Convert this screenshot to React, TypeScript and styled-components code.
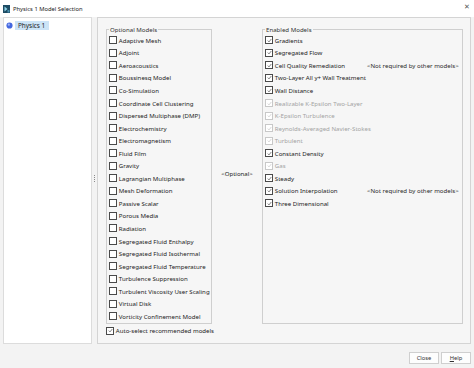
import React from "react";
import styled, { createGlobalStyle } from "styled-components";

const GlobalStyle = createGlobalStyle`
  html, body {
    margin: 0;
    padding: 0;
    background: #f3f3f3;
  }
  body {
    font-family: "Noto Sans", "Open Sans", sans-serif;
    color: #1b1b1b;
  }
`;

const optionalModels = [
  "Adaptive Mesh",
  "Adjoint",
  "Aeroacoustics",
  "Boussinesq Model",
  "Co-Simulation",
  "Coordinate Cell Clustering",
  "Dispersed Multiphase (DMP)",
  "Electrochemistry",
  "Electromagnetism",
  "Fluid Film",
  "Gravity",
  "Lagrangian Multiphase",
  "Mesh Deformation",
  "Passive Scalar",
  "Porous Media",
  "Radiation",
  "Segregated Fluid Enthalpy",
  "Segregated Fluid Isothermal",
  "Segregated Fluid Temperature",
  "Turbulence Suppression",
  "Turbulent Viscosity User Scaling",
  "Virtual Disk",
  "Vorticity Confinement Model",
];

type Enabled = { name: string; locked?: boolean; note?: boolean };

const enabledModels: Enabled[] = [
  { name: "Gradients" },
  { name: "Segregated Flow" },
  { name: "Cell Quality Remediation", note: true },
  { name: "Two-Layer All y+ Wall Treatment" },
  { name: "Wall Distance" },
  { name: "Realizable K-Epsilon Two-Layer", locked: true },
  { name: "K-Epsilon Turbulence", locked: true },
  { name: "Reynolds-Averaged Navier-Stokes", locked: true },
  { name: "Turbulent", locked: true },
  { name: "Constant Density" },
  { name: "Gas", locked: true },
  { name: "Steady" },
  { name: "Solution Interpolation", note: true },
  { name: "Three Dimensional" },
];

const Window = styled.div`
  width: 474px;
  height: 368px;
  display: flex;
  flex-direction: column;
  background: #f3f3f3;
  overflow: hidden;
`;

const TitleBar = styled.div`
  height: 17px;
  flex: none;
  display: flex;
  align-items: center;
  padding: 0 3px;
  background: #ffffff;
  font-size: 5.8px;
  color: #222;
`;

const TitleText = styled.span`
  margin-left: 3px;
  flex: 1;
`;

const CloseX = styled.span`
  font-size: 7px;
  color: #555;
  margin-right: 1px;
  margin-top: -5px;
`;

const Body = styled.div`
  flex: none;
  height: 327px;
  display: flex;
  padding: 0 3px;
`;

const Tree = styled.div`
  width: 89px;
  background: #ffffff;
  border: 1px solid #dcdcdc;
  padding: 2px 0 0 2px;
`;

const TreeItem = styled.div`
  display: flex;
  align-items: center;
  height: 10px;
  gap: 2px;
  font-size: 6.4px;
`;

const TreeLabel = styled.span`
  background: #cce4f7;
  padding: 0 4px 0 3px;
  line-height: 9px;
`;

const Splitter = styled.div`
  width: 5px;
  display: flex;
  flex-direction: column;
  align-items: center;
  justify-content: center;
  gap: 1.2px;
  padding-bottom: 4px;
`;

const Dot = styled.span`
  width: 1px;
  height: 1px;
  background: #8a8a8a;
`;

const Panel = styled.div`
  flex: 1;
  border: 1px solid #d4d4d4;
  background: #f6f6f6;
  padding: 7px 7px 0 8px;
  display: flex;
  flex-direction: column;
`;

const Columns = styled.div`
  display: flex;
  align-items: stretch;
  height: 299px;
`;

const Group = styled.fieldset<{ $width: number }>`
  width: ${(p) => p.$width}px;
  box-sizing: border-box;
  margin: 0;
  padding: 0 0 0 2px;
  border: 1px solid #cfcfcf;
  display: flex;
  flex-direction: column;
  min-width: 0;
`;

const Legend = styled.legend`
  font-size: 6.1px;
  padding: 0 1px;
  margin-left: 0;
  color: #333;
`;

const Row = styled.div`
  height: 12.55px;
  display: flex;
  align-items: center;
  font-size: 6.1px;
  white-space: nowrap;
`;

const Box = styled.span<{ $dim?: boolean }>`
  width: 6px;
  height: 6px;
  flex: none;
  border: 0.7px solid ${(p) => (p.$dim ? "#c8c8c8" : "#4a4a4a")};
  background: #ffffff;
  margin-right: 1.8px;
  display: flex;
  align-items: center;
  justify-content: center;
`;

const Label = styled.span<{ $dim?: boolean }>`
  color: ${(p) => (p.$dim ? "#a3a3a3" : "#1b1b1b")};
  flex: 1;
`;

const Note = styled.span`
  width: 95px;
  color: #2a2a2a;
`;

const Middle = styled.div`
  width: 50px;
  display: flex;
  align-items: center;
  justify-content: center;
  font-size: 6.1px;
  padding-bottom: 2px;
`;

const AutoRow = styled(Row)`
  height: 13px;
`;

const Footer = styled.div`
  flex: 1;
  display: flex;
  justify-content: flex-end;
  align-items: flex-start;
  gap: 2px;
  padding: 8px 3px 0 0;
`;

const Button = styled.button`
  width: 30px;
  height: 12px;
  padding: 0;
  border: 1px solid #cfcfcf;
  background: #fdfdfd;
  font-family: inherit;
  font-size: 5.8px;
  color: #333;
`;

const Check = ({ checked, dim }: { checked?: boolean; dim?: boolean }) => (
  <Box $dim={dim}>
    {checked && (
      <svg width="5" height="5" viewBox="0 0 10 10">
        <path
          d="M1.5 5.2 L4 7.8 L8.6 2"
          fill="none"
          stroke={dim ? "#bcbcbc" : "#333"}
          strokeWidth="1.2"
        />
      </svg>
    )}
  </Box>
);

const AppIcon = () => (
  <svg width="7" height="8" viewBox="0 0 7 8">
    <rect width="7" height="8" fill="#1d4b63" />
    <path d="M1.5 1.5 L4.5 4 L1.5 6.5 Z" fill="#8fd3e8" />
    <rect x="4.5" y="5" width="2" height="2.5" fill="#4a90b0" />
  </svg>
);

export default function App() {
  return (
    <>
      <GlobalStyle />
      <Window>
        <TitleBar>
          <AppIcon />
          <TitleText>Physics 1 Model Selection</TitleText>
          <CloseX>✕</CloseX>
        </TitleBar>
        <Body>
          <Tree>
            <TreeItem>
              <svg width="7" height="7" viewBox="0 0 10 10">
                <circle cx="5" cy="5" r="4.4" fill="#4468e0" />
                <circle cx="4" cy="3.8" r="1.6" fill="#9fb4f5" />
              </svg>
              <TreeLabel>Physics 1</TreeLabel>
            </TreeItem>
          </Tree>
          <Splitter>
            <Dot />
            <Dot />
            <Dot />
            <Dot />
          </Splitter>
          <Panel>
            <Columns>
              <Group $width={106}>
                <Legend>Optional Models</Legend>
                {optionalModels.map((m) => (
                  <Row key={m}>
                    <Check />
                    <Label>{m}</Label>
                  </Row>
                ))}
              </Group>
              <Middle>&lt;Optional&gt;</Middle>
              <Group $width={201}>
                <Legend>Enabled Models</Legend>
                {enabledModels.map((m) => (
                  <Row key={m.name}>
                    <Check checked dim={m.locked} />
                    <Label $dim={m.locked}>{m.name}</Label>
                    {m.note && <Note>&lt;Not required by other models&gt;</Note>}
                  </Row>
                ))}
              </Group>
            </Columns>
            <AutoRow>
              <Check checked />
              <Label>Auto-select recommended models</Label>
            </AutoRow>
          </Panel>
        </Body>
        <Footer>
          <Button>Close</Button>
          <Button>
            <u>H</u>elp
          </Button>
        </Footer>
      </Window>
    </>
  );
}
